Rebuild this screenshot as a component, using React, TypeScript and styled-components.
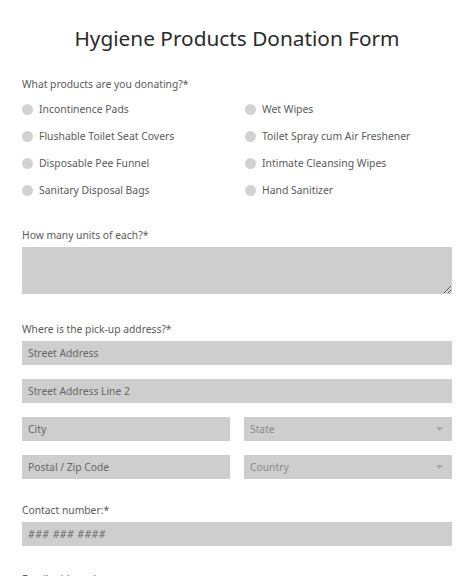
import React from "react";
import styled, { createGlobalStyle } from "styled-components";

const Global = createGlobalStyle`
  html, body { margin: 0; padding: 0; background: #fff; }
  body { font-family: "Noto Sans", "Open Sans", "Liberation Sans", sans-serif; overflow: hidden; }
  * { box-sizing: border-box; }
`;

const Page = styled.div`
  width: 474px;
  padding: 22px 22px 0 22px;
  display: flex;
  flex-direction: column;
`;

const Title = styled.h1`
  margin: 0;
  text-align: center;
  font-size: 20.8px;
  font-weight: 400;
  color: #2b2b2b;
  line-height: 32px;
`;

const Section = styled.div<{ $top: number }>`
  margin-top: ${(p) => p.$top}px;
  display: flex;
  flex-direction: column;
`;

const Label = styled.div`
  font-size: 10.3px;
  line-height: 16px;
  color: #5a5a5a;
  margin-bottom: 4px;
`;

const RadioGrid = styled.div`
  display: grid;
  grid-template-columns: 223px 1fr;
  row-gap: 11px;
  margin-top: 5px;
`;

const RadioItem = styled.label`
  display: flex;
  align-items: center;
  gap: 6px;
  font-size: 10.4px;
  line-height: 16px;
  color: #5a5a5a;
`;

const Dot = styled.span`
  width: 11px;
  height: 11px;
  border-radius: 50%;
  background: #d2d2d2;
  flex: none;
`;

const Stack = styled.div`
  display: flex;
  flex-direction: column;
  gap: 14px;
`;

const Row = styled.div`
  display: grid;
  grid-template-columns: 1fr 1fr;
  column-gap: 14px;
`;

const Input = styled.input<{ $italic?: boolean }>`
  width: 100%;
  height: 24px;
  border: none;
  outline: none;
  background: #cecece;
  padding: 0 6px;
  font-family: inherit;
  font-size: 10.3px;
  color: #555;
  &::placeholder {
    color: #666;
    font-style: ${(p) => (p.$italic ? "italic" : "normal")};
    letter-spacing: ${(p) => (p.$italic ? "0.5px" : "0")};
  }
`;

const TextArea = styled.textarea`
  width: 100%;
  height: 47px;
  border: none;
  outline: none;
  background: #cecece;
  resize: vertical;
  display: block;
  font-family: inherit;
`;

const SelectWrap = styled.div`
  position: relative;
  height: 24px;
  background: #cecece;
  display: flex;
  align-items: center;
  padding: 0 6px;
  font-size: 10.3px;
  color: #8a8a8a;
`;

const Caret = styled.svg`
  position: absolute;
  right: 9px;
  top: 10px;
`;

const Select = ({ text }: { text: string }) => (
  <SelectWrap>
    {text}
    <Caret width="7" height="4" viewBox="0 0 7 4">
      <path d="M0 0 L7 0 L3.5 4 Z" fill="#a8a8a8" />
    </Caret>
  </SelectWrap>
);

const products = [
  "Incontinence Pads",
  "Wet Wipes",
  "Flushable Toilet Seat Covers",
  "Toilet Spray cum Air Freshener",
  "Disposable Pee Funnel",
  "Intimate Cleansing Wipes",
  "Sanitary Disposal Bags",
  "Hand Sanitizer",
];

export default function App() {
  return (
    <>
      <Global />
      <Page>
        <Title>Hygiene Products Donation Form</Title>
        <Section $top={22}>
          <Label>What products are you donating?*</Label>
          <RadioGrid>
            {products.map((p) => (
              <RadioItem key={p}>
                <Dot />
                {p}
              </RadioItem>
            ))}
          </RadioGrid>
        </Section>
        <Section $top={29}>
          <Label>How many units of each?*</Label>
          <TextArea />
        </Section>
        <Section $top={27}>
          <Label>Where is the pick-up address?*</Label>
          <Stack>
            <Input placeholder="Street Address" />
            <Input placeholder="Street Address Line 2" />
            <Row>
              <Input placeholder="City" />
              <Select text="State" />
            </Row>
            <Row>
              <Input placeholder="Postal / Zip Code" />
              <Select text="Country" />
            </Row>
          </Stack>
        </Section>
        <Section $top={23}>
          <Label>Contact number:*</Label>
          <Input $italic placeholder="### ### ####" />
        </Section>
        <Section $top={25}>
          <Label>Email address:*</Label>
        </Section>
      </Page>
    </>
  );
}
